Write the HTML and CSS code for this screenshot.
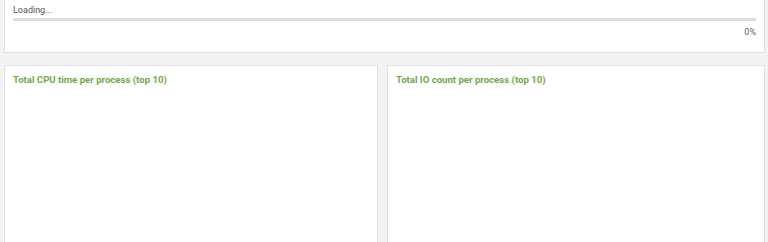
FILE: index.html
```html
<!DOCTYPE html>
<html>
<head>
<meta charset="utf-8">
<link rel="stylesheet" href="styles.css">
</head>
<body>
<div class="page">
  <section class="panel loading-panel">
    <div class="loading-label">Loading...</div>
    <div class="progress"><div class="progress-fill" style="width:0%"></div></div>
    <div class="progress-pct">0%</div>
  </section>
  <div class="charts">
    <section class="panel chart-panel">
      <h2 class="chart-title">Total CPU time per process (top 10)</h2>
    </section>
    <section class="panel chart-panel">
      <h2 class="chart-title">Total IO count per process (top 10)</h2>
    </section>
  </div>
</div>
</body>
</html>
```
FILE: styles.css
```css
html, body {
  margin: 0;
  padding: 0;
  background: #f3f3f3;
  font-family: Roboto, "Liberation Sans", Arial, sans-serif;
  overflow: hidden;
}
.page {
  padding: 0 3px 0 4px;
}
.panel {
  background: #fff;
  border: 1px solid #e1e1e1;
  box-sizing: border-box;
}
.loading-panel {
  border-top: none;
  height: 53px;
  padding: 4px 8px 0 8px;
}
.loading-label {
  font-size: 9px;
  color: #555;
  line-height: 12px;
}
.progress {
  margin-top: 2px;
  height: 3px;
  background: #dcdcdc;
}
.progress-fill {
  height: 100%;
  background: #8bbd5b;
}
.progress-pct {
  text-align: right;
  font-size: 9px;
  color: #666;
  line-height: 12px;
  margin-top: 5px;
}
.charts {
  margin-top: 12px;
  display: grid;
  grid-template-columns: 374px 1fr;
  gap: 9px;
}
.chart-panel {
  height: 300px;
  padding: 8px 8px;
}
.chart-title {
  margin: 0;
  font-size: 9.6px;
  font-weight: bold;
  color: #76a64c;
  line-height: 12px;
}
```
